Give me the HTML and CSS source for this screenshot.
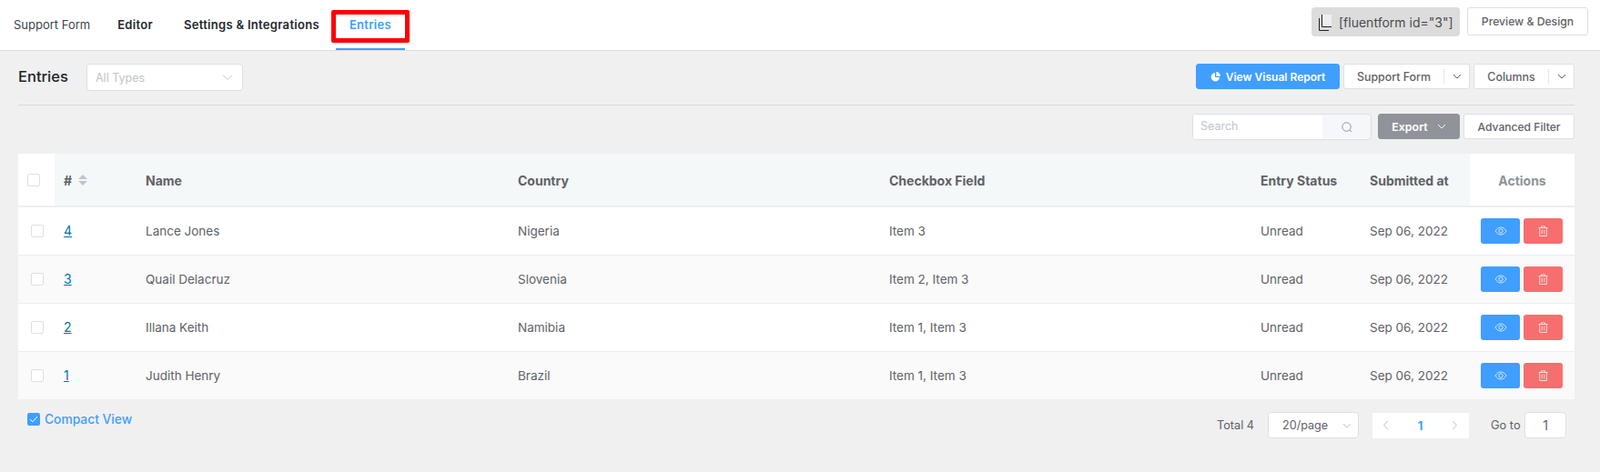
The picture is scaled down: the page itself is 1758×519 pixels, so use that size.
FILE: index.html
```html
<!DOCTYPE html>
<html lang="en">
<head>
<meta charset="utf-8">
<title>Entries</title>
<link rel="stylesheet" href="styles.css">
</head>
<body>
<header class="topbar">
  <nav class="tabs">
    <a class="tab tab-title">Support Form</a>
    <a class="tab">Editor</a>
    <a class="tab">Settings &amp; Integrations</a>
    <a class="tab tab-active">Entries<span class="highlight"></span></a>
  </nav>
  <div class="top-actions">
    <div class="shortcode">
      <svg class="shortcode-icon" width="16" height="20" viewBox="0 0 16 20"><rect x="5" y="1" width="10" height="13" fill="#efefef"/><path d="M4.500 1v13.500H15M1.500 5v13.500H12" fill="none" stroke="#222" stroke-width="1"/></svg>
      <span>[fluentform id="3"]</span>
    </div>
    <button class="btn btn-preview">Preview &amp; Design</button>
  </div>
</header>

<main class="content">
  <section class="head-row">
    <div class="head-left">
      <h1 class="page-title">Entries</h1>
      <div class="select select-types">
        <span class="placeholder">All Types</span>
        <svg class="chev" width="12" height="8" viewBox="0 0 12 8"><path d="M1 1.500l5 5 5-5" fill="none" stroke="#c0c4cc" stroke-width="1"/></svg>
      </div>
    </div>
    <div class="head-right">
      <button class="btn btn-primary">
        <svg width="11" height="11" viewBox="0 0 11 11"><path d="M5 1a4.700 4.700 0 1 0 5 5H5z" fill="#fff"/><path d="M6.300 0A4.700 4.700 0 0 1 11 4.700H6.300z" fill="#fff"/></svg>
        View Visual Report
      </button>
      <div class="split split-form">
        <span class="split-label">Support Form</span>
        <span class="split-caret"><svg width="10" height="6" viewBox="0 0 10 6"><path d="M1 1l4 4 4-4" fill="none" stroke="#606266" stroke-width="1"/></svg></span>
      </div>
      <div class="split split-cols">
        <span class="split-label">Columns</span>
        <span class="split-caret"><svg width="10" height="6" viewBox="0 0 10 6"><path d="M1 1l4 4 4-4" fill="none" stroke="#606266" stroke-width="1"/></svg></span>
      </div>
    </div>
  </section>

  <section class="tools-row">
    <div class="search">
      <span class="search-input">Search</span>
      <span class="search-append"><svg width="14" height="14" viewBox="0 0 14 14"><circle cx="6.500" cy="6.500" r="4.700" fill="none" stroke="#909399" stroke-width="1"/><path d="M10 10l2 2" stroke="#909399" stroke-width="1"/></svg></span>
    </div>
    <button class="btn btn-export">Export
      <svg width="10" height="6" viewBox="0 0 10 6"><path d="M1 1l4 4 4-4" fill="none" stroke="#fff" stroke-width="1"/></svg>
    </button>
    <button class="btn btn-filter">Advanced Filter</button>
  </section>

  <table class="entries">
    <colgroup>
      <col class="c-check"><col class="c-id"><col class="c-name"><col class="c-wide"><col class="c-wide"><col class="c-meta"><col class="c-meta"><col class="c-actions">
    </colgroup>
    <thead>
      <tr>
        <th class="th-plain th-check"><span class="checkbox"></span></th>
        <th><span class="sort-wrap">#<svg width="10" height="12" viewBox="0 0 10 12"><path d="M5 0l5 5H0z" fill="#c0c4cc"/><path d="M5 12L0 7h10z" fill="#c0c4cc"/></svg></span></th>
        <th>Name</th>
        <th>Country</th>
        <th>Checkbox Field</th>
        <th>Entry Status</th>
        <th>Submitted at</th>
        <th class="th-plain th-actions">Actions</th>
      </tr>
    </thead>
    <tbody>
      <tr>
        <td class="td-check"><span class="checkbox"></span></td>
        <td><a class="id-link">4</a></td>
        <td>Lance Jones</td><td>Nigeria</td><td>Item 3</td><td>Unread</td><td>Sep 06, 2022</td>
        <td class="td-actions"><span class="act-group">
          <button class="act act-view"><svg width="14" height="10" viewBox="0 0 14 10"><path d="M1 5c1.500-2.500 3.500-4 6-4s4.500 1.500 6 4c-1.500 2.500-3.500 4-6 4S2.500 7.500 1 5z" fill="none" stroke="#dcecff" stroke-width=".9"/><circle cx="7" cy="5" r="2.200" fill="none" stroke="#dcecff" stroke-width=".9"/></svg></button>
          <button class="act act-del"><svg width="11" height="12" viewBox="0 0 11 12"><path d="M0.500 2.500h10M3.500 2.500V.800h4v1.700M1.700 2.500v9h7.600v-9M4.200 4.500v5M6.800 4.500v5" fill="none" stroke="#ffe4e4" stroke-width=".9"/></svg></button>
        </span></td>
      </tr>
      <tr>
        <td class="td-check"><span class="checkbox"></span></td>
        <td><a class="id-link">3</a></td>
        <td>Quail Delacruz</td><td>Slovenia</td><td>Item 2, Item 3</td><td>Unread</td><td>Sep 06, 2022</td>
        <td class="td-actions"><span class="act-group">
          <button class="act act-view"><svg width="14" height="10" viewBox="0 0 14 10"><path d="M1 5c1.500-2.500 3.500-4 6-4s4.500 1.500 6 4c-1.500 2.500-3.500 4-6 4S2.500 7.500 1 5z" fill="none" stroke="#dcecff" stroke-width=".9"/><circle cx="7" cy="5" r="2.200" fill="none" stroke="#dcecff" stroke-width=".9"/></svg></button>
          <button class="act act-del"><svg width="11" height="12" viewBox="0 0 11 12"><path d="M0.500 2.500h10M3.500 2.500V.800h4v1.700M1.700 2.500v9h7.600v-9M4.200 4.500v5M6.800 4.500v5" fill="none" stroke="#ffe4e4" stroke-width=".9"/></svg></button>
        </span></td>
      </tr>
      <tr>
        <td class="td-check"><span class="checkbox"></span></td>
        <td><a class="id-link">2</a></td>
        <td>Illana Keith</td><td>Namibia</td><td>Item 1, Item 3</td><td>Unread</td><td>Sep 06, 2022</td>
        <td class="td-actions"><span class="act-group">
          <button class="act act-view"><svg width="14" height="10" viewBox="0 0 14 10"><path d="M1 5c1.500-2.500 3.500-4 6-4s4.500 1.500 6 4c-1.500 2.500-3.500 4-6 4S2.500 7.500 1 5z" fill="none" stroke="#dcecff" stroke-width=".9"/><circle cx="7" cy="5" r="2.200" fill="none" stroke="#dcecff" stroke-width=".9"/></svg></button>
          <button class="act act-del"><svg width="11" height="12" viewBox="0 0 11 12"><path d="M0.500 2.500h10M3.500 2.500V.800h4v1.700M1.700 2.500v9h7.600v-9M4.200 4.500v5M6.800 4.500v5" fill="none" stroke="#ffe4e4" stroke-width=".9"/></svg></button>
        </span></td>
      </tr>
      <tr>
        <td class="td-check"><span class="checkbox"></span></td>
        <td><a class="id-link">1</a></td>
        <td>Judith Henry</td><td>Brazil</td><td>Item 1, Item 3</td><td>Unread</td><td>Sep 06, 2022</td>
        <td class="td-actions"><span class="act-group">
          <button class="act act-view"><svg width="14" height="10" viewBox="0 0 14 10"><path d="M1 5c1.500-2.500 3.500-4 6-4s4.500 1.500 6 4c-1.500 2.500-3.500 4-6 4S2.500 7.500 1 5z" fill="none" stroke="#dcecff" stroke-width=".9"/><circle cx="7" cy="5" r="2.200" fill="none" stroke="#dcecff" stroke-width=".9"/></svg></button>
          <button class="act act-del"><svg width="11" height="12" viewBox="0 0 11 12"><path d="M0.500 2.500h10M3.500 2.500V.800h4v1.700M1.700 2.500v9h7.600v-9M4.200 4.500v5M6.800 4.500v5" fill="none" stroke="#ffe4e4" stroke-width=".9"/></svg></button>
        </span></td>
      </tr>
    </tbody>
  </table>

  <footer class="foot-row">
    <label class="compact">
      <span class="checkbox checkbox-on"><svg width="10" height="8" viewBox="0 0 10 8"><path d="M1 4l2.800 2.800L9 1" fill="none" stroke="#fff" stroke-width="1"/></svg></span>
      Compact View
    </label>
    <div class="pagination">
      <span class="total">Total 4</span>
      <div class="select select-page">
        <span>20/page</span>
        <svg width="10" height="6" viewBox="0 0 10 6"><path d="M1 1l4 4 4-4" fill="none" stroke="#c0c4cc" stroke-width="1"/></svg>
      </div>
      <div class="pager">
        <svg width="7" height="11" viewBox="0 0 7 11"><path d="M6 .8L1.500 5.500 6 10.200" fill="none" stroke="#c0c4cc" stroke-width="1"/></svg>
        <b>1</b>
        <svg width="7" height="11" viewBox="0 0 7 11"><path d="M1 .8l4.500 4.700L1 10.200" fill="none" stroke="#c0c4cc" stroke-width="1"/></svg>
      </div>
      <span class="goto">Go to</span>
      <div class="goto-input">1</div>
    </div>
  </footer>
</main>
</body>
</html>
```
FILE: styles.css
```css
* { box-sizing: border-box; }
html, body { margin: 0; padding: 0; }
body {
  height: 519px;
  overflow: hidden;
  background: #f0f0f1;
  font-family: Inter, "Liberation Sans", sans-serif;
  font-size: 13px;
  color: #606266;
}
button { font-family: inherit; font-size: 13px; cursor: pointer; }

.topbar {
  height: 56px;
  background: #fff;
  border-bottom: 1px solid #dcdcde;
  display: flex;
  justify-content: space-between;
  padding: 8px 13px 0 0;
}
.tabs { display: flex; margin-top: -8px; height: 55px; }
.tab {
  position: relative;
  display: flex;
  align-items: center;
  padding: 0 15px;
  margin-right: 4px;
  font-weight: 600;
  letter-spacing: .3px;
  color: #23282d;
  border-bottom: 2px solid transparent;
}
.tab-title { font-weight: 400; letter-spacing: 0; color: #3c434a; margin-right: 0; }
.tab-active { color: #409eff; border-bottom-color: #409eff; margin-left: -1px; }
.highlight {
  position: absolute;
  left: -5px;
  right: -5px;
  top: 11px;
  height: 36px;
  border: 5px solid #f00;
  border-radius: 2px;
}

.top-actions { display: flex; gap: 8px; align-items: flex-start; }
.shortcode {
  width: 163px;
  height: 32px;
  background: #dcdcdc;
  border-radius: 4px;
  display: flex;
  align-items: center;
  gap: 7px;
  padding: 1px 0 0 7px;
  font-size: 14px;
  color: #4b4c4d;
  white-space: nowrap;
}
.btn {
  height: 28px;
  border: 1px solid #dcdfe6;
  border-radius: 3px;
  background: #fff;
  color: #606266;
  padding: 0;
  display: inline-flex;
  align-items: center;
  justify-content: center;
  font-weight: 500;
}
.btn-preview { width: 133px; height: 31px; font-size: 12.200px; }

.content { padding: 14px 28px 0 20px; }
.head-row {
  display: flex;
  justify-content: space-between;
  height: 46px;
  border-bottom: 1px solid #d9d9db;
}
.head-left { display: flex; gap: 20px; align-items: flex-start; }
.page-title {
  margin: 0;
  width: 55px;
  font-size: 16.500px;
  line-height: 29px;
  font-weight: 500;
  color: #1d2327;
}
.select {
  background: #fff;
  border: 1px solid #dcdfe6;
  border-radius: 4px;
  display: flex;
  align-items: center;
  justify-content: space-between;
}
.select-types { width: 172px; height: 30px; padding: 0 10px 0 9px; font-size: 12.500px; }
.placeholder { color: #c0c4cc; }
.head-right { display: flex; gap: 4px; align-items: flex-start; }
.btn-primary {
  width: 158px;
  background: #409eff;
  border-color: #409eff;
  color: #fff;
  gap: 6px;
  font-size: 12px;
  font-weight: 600;
}
.split {
  height: 28px;
  background: #fff;
  border: 1px solid #dcdfe6;
  border-radius: 3px;
  display: flex;
  align-items: center;
  font-weight: 500;
  font-size: 12.400px;
}
.split-label { flex: 1; text-align: center; }
.split-caret {
  width: 28px;
  height: 16px;
  border-left: 1px solid #e4e7ed;
  display: flex;
  align-items: center;
  justify-content: center;
}
.split-form { width: 139px; }
.split-cols { width: 111px; }

.tools-row {
  display: flex;
  justify-content: flex-end;
  gap: 4px;
  margin-top: 9px;
  height: 29px;
}
.search {
  width: 197px;
  height: 29px;
  margin-right: 3px;
  display: flex;
  border: 1px solid #dcdfe6;
  border-radius: 4px;
  background: #f5f7fa;
  overflow: hidden;
}
.search-input {
  width: 142px;
  background: #fff;
  color: #c0c4cc;
  font-size: 12.500px;
  padding-left: 8px;
  line-height: 26px;
}
.search-append { flex: 1; display: flex; align-items: center; justify-content: center; padding-left: 1px; }
.btn-export {
  width: 90px;
  background: #909399;
  border-color: #909399;
  color: #fff;
  gap: 10px;
  font-size: 12.400px;
  font-weight: 600;
}
.btn-filter { width: 122px; font-size: 12.100px; }

.entries {
  width: 1710px;
  margin-top: 15px;
  border-collapse: collapse;
  table-layout: fixed;
  background: #fff;
}
.c-check { width: 40px; }
.c-id { width: 90px; }
.c-name { width: 409px; }
.c-wide { width: 408px; }
.c-meta { width: 120px; }
.c-actions { width: 115px; }
th {
  height: 58px;
  padding: 1px 10px 0;
  text-align: left;
  font-size: 14px;
  font-weight: 700;
  color: #606266;
  background: #f5f8f9;
  border-bottom: 2px solid #ebeef5;
}
.th-plain { background: #fff; }
.th-actions { text-align: center; color: #909399; padding: 1px 0 0; }
.sort-wrap { display: inline-flex; align-items: center; gap: 7px; }
td {
  height: 53px;
  padding: 0 10px;
  font-size: 13.500px;
  border-bottom: 1px solid #ebeef5;
  background: #fff;
}
tbody tr:nth-child(even) td { background: #fafafa; }
tbody tr:last-child td { border-bottom: 0; }
.td-check { padding-left: 14px; }
.checkbox {
  display: block;
  width: 14px;
  height: 14px;
  background: #fff;
  border: 1px solid #dcdfe6;
  border-radius: 2px;
}
.id-link { color: #0073aa; text-decoration: underline; font-size: 14px; }
.td-actions { padding: 0; text-align: left; }
.act-group { display: flex; gap: 4px; padding-left: 12px; }
.act {
  width: 43px;
  height: 28px;
  border: 0;
  border-radius: 3px;
  padding: 0;
  display: flex;
  align-items: center;
  justify-content: center;
}
.act-view { background: #409eff; }
.act-del { background: #f76e6e; }

.foot-row {
  display: flex;
  justify-content: space-between;
  align-items: flex-start;
  padding: 14px 9px 0 10px;
}
.compact {
  display: flex;
  align-items: center;
  gap: 5px;
  color: #409eff;
  font-size: 13.800px;
  font-weight: 500;
}
.checkbox-on {
  background: #409eff;
  border-color: #409eff;
  display: flex;
  align-items: center;
  justify-content: center;
}
.pagination { display: flex; align-items: center; height: 29px; }
.total { width: 56px; font-size: 12.700px; }
.select-page { width: 100px; height: 29px; padding: 0 7px 0 15px; font-size: 12.600px; }
.pager {
  width: 106px;
  height: 28px;
  margin-left: 15px;
  background: #fff;
  display: flex;
  align-items: center;
  justify-content: space-between;
  padding: 0 12px 0 11px;
}
.pager b { color: #409eff; font-size: 13px; }
.goto { margin-left: 24px; width: 37px; font-size: 12.800px; }
.goto-input {
  width: 46px;
  height: 29px;
  background: #fff;
  border: 1px solid #dcdfe6;
  border-radius: 4px;
  display: flex;
  align-items: center;
  justify-content: center;
  font-size: 14px;
}
```
